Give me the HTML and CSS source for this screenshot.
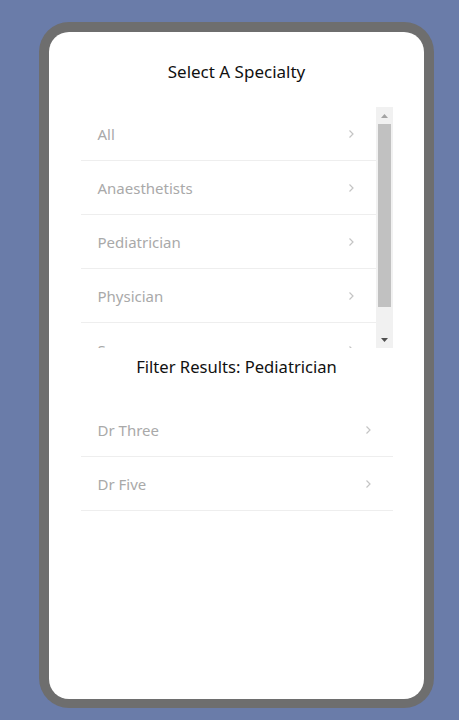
FILE: index.html
```html
<!DOCTYPE html>
<html>
<head>
    <title>Specialty Picker</title>
    <link rel="stylesheet" href="styles.css">
</head>
<body>
    <div class="phone">
        <div class="screen">
            <h2 class="section-title">Select A Specialty</h2>

            <div class="scroll-box">
                <div class="list scroll-list">
                    <div class="list-item"><span>All</span><svg class="chevron" width="7" height="10" viewBox="0 0 7 10"><polyline points="1.5,1.5 5,5 1.5,8.5"/></svg></div>
                    <div class="list-item"><span>Anaesthetists</span><svg class="chevron" width="7" height="10" viewBox="0 0 7 10"><polyline points="1.5,1.5 5,5 1.5,8.5"/></svg></div>
                    <div class="list-item"><span>Pediatrician</span><svg class="chevron" width="7" height="10" viewBox="0 0 7 10"><polyline points="1.5,1.5 5,5 1.5,8.5"/></svg></div>
                    <div class="list-item"><span>Physician</span><svg class="chevron" width="7" height="10" viewBox="0 0 7 10"><polyline points="1.5,1.5 5,5 1.5,8.5"/></svg></div>
                    <div class="list-item"><span>Surgeon</span><svg class="chevron" width="7" height="10" viewBox="0 0 7 10"><polyline points="1.5,1.5 5,5 1.5,8.5"/></svg></div>
                </div>
                <div class="scrollbar">
                    <div class="scroll-btn"><svg width="7" height="4" viewBox="0 0 7 4"><polygon points="0,4 3.5,0 7,4" fill="#a3a3a3"/></svg></div>
                    <div class="scroll-track"><div class="scroll-thumb"></div></div>
                    <div class="scroll-btn"><svg width="7" height="4" viewBox="0 0 7 4"><polygon points="0,0 7,0 3.5,4" fill="#505050"/></svg></div>
                </div>
            </div>

            <h2 class="section-title filter-title">Filter Results: Pediatrician</h2>

            <div class="list results-list">
                <div class="list-item"><span>Dr Three</span><svg class="chevron" width="7" height="10" viewBox="0 0 7 10"><polyline points="1.5,1.5 5,5 1.5,8.5"/></svg></div>
                <div class="list-item"><span>Dr Five</span><svg class="chevron" width="7" height="10" viewBox="0 0 7 10"><polyline points="1.5,1.5 5,5 1.5,8.5"/></svg></div>
            </div>
        </div>
    </div>
</body>
</html>
```

FILE: styles.css
```css
html, body {
    margin: 0;
    height: 100%;
}
body {
    background-color: #6a7ca9;
    font-family: "Noto Sans", "Open Sans", sans-serif;
    padding: 22px 0 0 39px;
    box-sizing: border-box;
}
.phone {
    width: 395px;
    height: 686px;
    background-color: #6e6e6e;
    border-radius: 30px;
    padding: 10px;
    box-sizing: border-box;
}
.screen {
    width: 375px;
    height: 667px;
    background-color: white;
    border-radius: 20px;
    overflow: hidden;
}
.section-title {
    margin: 28px 0 0;
    font-size: 17px;
    font-weight: normal;
    line-height: 24px;
    text-align: center;
    color: #111;
}
.filter-title {
    margin-top: 7px;
    font-size: 16.6px;
}
.scroll-box {
    display: flex;
    width: 312px;
    height: 241px;
    margin: 23px auto 0;
}
.list {
    width: 312px;
    margin: 0 auto;
}
.scroll-list {
    flex: 1;
    overflow: hidden;
}
.results-list {
    margin-top: 24px;
}
.list-item {
    display: flex;
    align-items: center;
    justify-content: space-between;
    height: 53px;
    padding: 0 21px 0 17px;
    border-bottom: 1px solid #eeeeee;
    font-size: 15px;
    color: #a9a9a9;
}
.chevron {
    fill: none;
    stroke: #c4c4c4;
    stroke-width: 1.2;
}

/* fake windows style scrollbar */
.scrollbar {
    width: 17px;
    display: flex;
    flex-direction: column;
    background-color: #f1f1f1;
}
.scroll-btn {
    height: 17px;
    display: flex;
    align-items: center;
    justify-content: center;
}
.scroll-track {
    flex: 1;
    padding: 0 2px;
}
.scroll-thumb {
    height: 183px;
    background-color: #c1c1c1;
}
```
